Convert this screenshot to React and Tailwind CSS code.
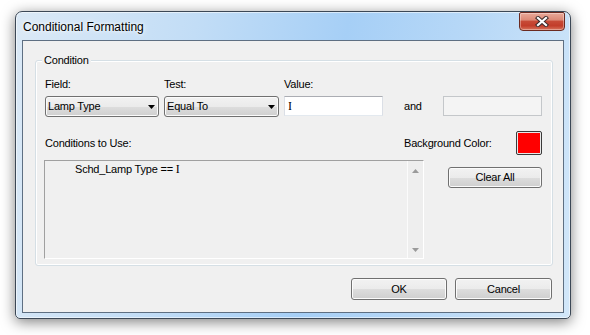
import React from "react";

const btn =
  "flex items-center justify-center rounded-[3px] border border-[#707070] bg-[linear-gradient(#f2f2f2_0%,#ebebeb_50%,#dddddd_51%,#cfcfcf_100%)] shadow-[inset_0_0_0_1px_#fbfbfb] text-[11px] tracking-[-0.2px] text-black";

function Select({ label, width }) {
  return (
    <div
      className={`flex items-center justify-between h-[21px] rounded-[3px] border border-[#707070] bg-[linear-gradient(#f2f2f2_0%,#ebebeb_50%,#dddddd_51%,#cfcfcf_100%)] shadow-[inset_0_0_0_1px_#fbfbfb] pl-[2px] pr-[3px] ${width}`}
    >
      <span className="leading-[13px]">{label}</span>
      <svg width="7" height="4" viewBox="0 0 7 4">
        <path d="M0 0H7L3.5 4Z" fill="#000" />
      </svg>
    </div>
  );
}

function SerifI() {
  return <span className="font-['Liberation_Serif',serif] text-[12px]">I</span>;
}

export default function App() {
  return (
    <div className="w-[590px] h-[335px] bg-white overflow-hidden font-['Liberation_Sans',Arial,sans-serif] text-[11px] tracking-[-0.2px] text-black pt-[11px] pl-[15px]">
      <div className="w-[556px] h-[308px] rounded-t-[7px] rounded-b-[5px] border border-[#3c4856] bg-[linear-gradient(100deg,#dbe9f6_0%,#c2ddf6_30%,#a6cff6_55%,#b7d8f7_75%,#d2e7f9_100%)] shadow-[0_3px_14px_rgba(0,0,0,0.5),inset_0_0_0_1px_rgba(255,255,255,0.55)] flex flex-col">
        <div className="h-[28px] flex items-start justify-between pl-[7px] pr-[5px]">
          <span className="mt-[8px] text-[12px] leading-[15px] tracking-normal [text-shadow:0_0_6px_#ffffff,0_0_3px_#ffffff]">
            Conditional Formatting
          </span>
          <div className="w-[46px] h-[19px] rounded-b-[4px] rounded-t-[2px] border border-[#6b2a20] bg-[linear-gradient(#e9a99a_0%,#dc8a77_40%,#c74a36_50%,#c23d2a_75%,#d8745c_100%)] shadow-[inset_0_0_0_1px_rgba(255,255,255,0.35)] flex items-center justify-center">
            <svg width="14" height="11" viewBox="0 0 14 11">
              <path d="M3 2L11 9M11 2L3 9" stroke="#3b2b2b" strokeWidth="4.2" strokeLinecap="square" />
              <path d="M3 2L11 9M11 2L3 9" stroke="#ffffff" strokeWidth="2.2" strokeLinecap="square" />
            </svg>
          </div>
        </div>
        <div className="mx-[6px] mb-[5px] flex-1 border border-[#5e6f82] bg-[#f0f0f0] flex flex-col pt-[19px] pl-[12px] pr-[10px]">
          <div className="relative w-[518px] h-[206px] rounded-[3px] border border-[#d5dfe5] shadow-[inset_0_0_0_1px_#ffffff] pt-[17px] pl-[9px]">
            <span className="absolute -top-[7px] left-[6px] bg-[#f0f0f0] px-[2px] leading-[13px]">
              Condition
            </span>
            <div className="flex items-end">
              <div className="flex flex-col gap-[5px] w-[114px]">
                <span className="leading-[13px]">Field:</span>
                <Select label="Lamp Type" width="w-[114px]" />
              </div>
              <div className="flex flex-col gap-[5px] w-[115px] ml-[5px]">
                <span className="leading-[13px]">Test:</span>
                <Select label="Equal To" width="w-[115px]" />
              </div>
              <div className="flex flex-col gap-[5px] w-[99px] ml-[5px]">
                <span className="leading-[13px]">Value:</span>
                <div className="h-[20px] mb-[1px] border border-[#dbdfe6] border-t-[#abadb3] border-b-[#e3e9ef] bg-white flex items-center pl-[3px]">
                  <SerifI />
                </div>
              </div>
              <div className="h-[21px] flex items-center ml-[21px] w-[39px]">
                <span>and</span>
              </div>
              <div className="w-[99px] h-[20px] mb-[1px] border border-[#c4c7ca] bg-[#f4f4f4]" />
            </div>
            <div className="flex items-center mt-[14px] h-[24px]">
              <span className="w-[359px]">Conditions to Use:</span>
              <span className="w-[112px]">Background Color:</span>
              <div className="w-[26px] h-[24px] rounded-[2px] border border-[#3a3a3a] p-[1px] bg-[#e8e8e8]">
                <div className="w-full h-full bg-[#ff0000]" />
              </div>
            </div>
            <div className="flex items-start mt-[5px]">
              <div className="-ml-[1px] w-[380px] h-[99px] border border-[#a0a0a0] border-r-white border-b-white bg-[#f0f0f0] flex">
                <div className="flex-1 pl-[30px] pt-[2px] leading-[13px]">
                  Schd_Lamp Type == <SerifI />
                </div>
                <div className="w-[16px] h-full border-l border-[#fbfbfb] bg-[#eeeeee] flex flex-col items-center justify-between pt-[8px] pb-[6px]">
                  <svg width="7" height="4" viewBox="0 0 7 4">
                    <path d="M0 4H7L3.5 0Z" fill="#9a9a9a" />
                  </svg>
                  <svg width="7" height="4" viewBox="0 0 7 4">
                    <path d="M0 0H7L3.5 4Z" fill="#9a9a9a" />
                  </svg>
                </div>
              </div>
              <div className={`${btn} ml-[24px] mt-[7px] w-[94px] h-[21px]`}>Clear All</div>
            </div>
          </div>
          <div className="flex justify-end gap-[8px] mt-[12px] pr-[1px]">
            <div className={`${btn} w-[96px] h-[22px]`}>OK</div>
            <div className={`${btn} w-[97px] h-[22px]`}>Cancel</div>
          </div>
        </div>
      </div>
    </div>
  );
}
